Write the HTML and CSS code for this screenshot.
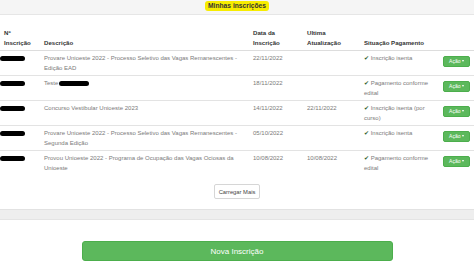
FILE: index.html
```html
<!DOCTYPE html>
<html lang="pt-BR">
<head>
<meta charset="utf-8">
<title>Minhas inscrições</title>
<link rel="stylesheet" href="styles.css">
</head>
<body>
<div class="panel">
  <div class="panel-heading"><span class="title">Minhas inscrições</span></div>
  <div class="panel-body">
    <table class="grid">
      <colgroup>
        <col class="c-num"><col class="c-desc"><col class="c-date"><col class="c-upd"><col class="c-stat"><col class="c-act">
      </colgroup>
      <thead>
        <tr>
          <th>Nº<br>Inscrição</th>
          <th>Descrição</th>
          <th>Data da<br>Inscrição</th>
          <th>Ultima<br>Atualização</th>
          <th>Situação Pagamento</th>
          <th></th>
        </tr>
      </thead>
      <tbody>
        <tr>
          <td><span class="redact"></span></td>
          <td>Provare Unioeste 2022 - Processo Seletivo das Vagas Remanescentes -<br>Edição EAD</td>
          <td>22/11/2022</td>
          <td></td>
          <td class="status"><span class="chk">✔</span> Inscrição isenta</td>
          <td><button class="btn-acao">Ação <span class="caret"></span></button></td>
        </tr>
        <tr>
          <td><span class="redact"></span></td>
          <td>Teste<span class="redact-inline"></span></td>
          <td>18/11/2022</td>
          <td></td>
          <td class="status"><span class="chk">✔</span> Pagamento conforme<br>edital</td>
          <td><button class="btn-acao">Ação <span class="caret"></span></button></td>
        </tr>
        <tr>
          <td><span class="redact"></span></td>
          <td>Concurso Vestibular Unioeste 2023</td>
          <td>14/11/2022</td>
          <td>22/11/2022</td>
          <td class="status"><span class="chk">✔</span> Inscrição isenta (por<br>curso)</td>
          <td><button class="btn-acao">Ação <span class="caret"></span></button></td>
        </tr>
        <tr>
          <td><span class="redact"></span></td>
          <td>Provare Unioeste 2022 - Processo Seletivo das Vagas Remanescentes -<br>Segunda Edição</td>
          <td>05/10/2022</td>
          <td></td>
          <td class="status"><span class="chk">✔</span> Inscrição isenta</td>
          <td><button class="btn-acao">Ação <span class="caret"></span></button></td>
        </tr>
        <tr>
          <td><span class="redact"></span></td>
          <td>Provou Unioeste 2022 - Programa de Ocupação das Vagas Ociosas da<br>Unioeste</td>
          <td>10/08/2022</td>
          <td>10/08/2022</td>
          <td class="status"><span class="chk">✔</span> Pagamento conforme<br>edital</td>
          <td><button class="btn-acao">Ação <span class="caret"></span></button></td>
        </tr>
      </tbody>
    </table>
    <div class="more-row"><button class="btn-more">Carregar Mais</button></div>
  </div>
  <div class="panel-footer"></div>
</div>
<div class="new-row"><button class="btn-new">Nova Inscrição</button></div>
</body>
</html>
```

FILE: styles.css
```css
html, body {
  margin: 0;
  padding: 0;
  background: #fff;
  font-family: "Liberation Sans", Arial, sans-serif;
  color: #666;
}

.panel {
  border-bottom: 1px solid #e4e4e4;
}

.panel-heading {
  height: 15px;
  background: #f5f5f5;
  border-bottom: 1px solid #e6e6e6;
  display: flex;
  justify-content: center;
  align-items: flex-start;
  padding-top: 1px;
  box-sizing: border-box;
}

.title {
  font-size: 6.7px;
  font-weight: bold;
  color: #333;
  background: #f7ec00;
  line-height: 10px;
  padding: 0 3.5px;
  border-radius: 3px;
}

.panel-body {
  padding: 11px 0 10px;
}

.grid {
  width: 100%;
  border-collapse: collapse;
  table-layout: fixed;
  font-size: 6px;
  line-height: 10px;
}

.c-num { width: 40px; }
.c-desc { width: 209px; }
.c-date { width: 54px; }
.c-upd { width: 57px; }
.c-stat { width: 78px; }

.grid th {
  text-align: left;
  vertical-align: bottom;
  font-weight: bold;
  font-size: 6.1px;
  color: #333;
  padding: 2px 4px;
  border-bottom: 1px solid #ddd;
}

.grid td {
  vertical-align: top;
  padding: 2px 4px;
  border-top: 1px solid #e3e3e3;
  color: #7a7a7a;
  white-space: nowrap;
}

.redact {
  display: inline-block;
  width: 25px;
  height: 5px;
  margin-left: -4px;
  background: #000;
  border-radius: 3px;
  vertical-align: -1px;
}

.redact-inline {
  display: inline-block;
  width: 30px;
  height: 5px;
  margin-left: 1px;
  background: #000;
  border-radius: 3px;
  vertical-align: -1px;
}

.status {
  color: #5aa35a;
}

.chk {
  color: #2f5f2f;
  font-size: 5.5px;
}

.btn-acao {
  display: block;
  margin-top: 3px;
  margin-left: 1px;
  width: 27px;
  height: 11px;
  padding: 0;
  border: 1px solid #4cae4c;
  border-radius: 2px;
  background: #5cb85c;
  color: #fff;
  font-family: "Liberation Sans", Arial, sans-serif;
  font-size: 5px;
  line-height: 9px;
}

.caret {
  display: inline-block;
  width: 0;
  height: 0;
  border-left: 1.5px solid transparent;
  border-right: 1.5px solid transparent;
  border-top: 2px solid #fff;
  vertical-align: 1px;
}

.more-row {
  display: flex;
  justify-content: center;
  margin-top: 9px;
}

.btn-more {
  width: 46px;
  height: 15px;
  padding: 0;
  background: #fff;
  border: 1px solid #d6d6d6;
  border-radius: 2px;
  color: #444;
  font-family: "Liberation Sans", Arial, sans-serif;
  font-size: 5.8px;
}

.panel-footer {
  height: 9px;
  background: #eeeeee;
  border-top: 1px solid #e2e2e2;
}

.new-row {
  display: flex;
  justify-content: center;
  margin-top: 21px;
}

.btn-new {
  width: 311px;
  height: 20px;
  padding: 0;
  border: 1px solid #4cae4c;
  border-radius: 3px;
  background: #5cb85c;
  color: #fff;
  font-family: "Liberation Sans", Arial, sans-serif;
  font-size: 8px;
}
```
